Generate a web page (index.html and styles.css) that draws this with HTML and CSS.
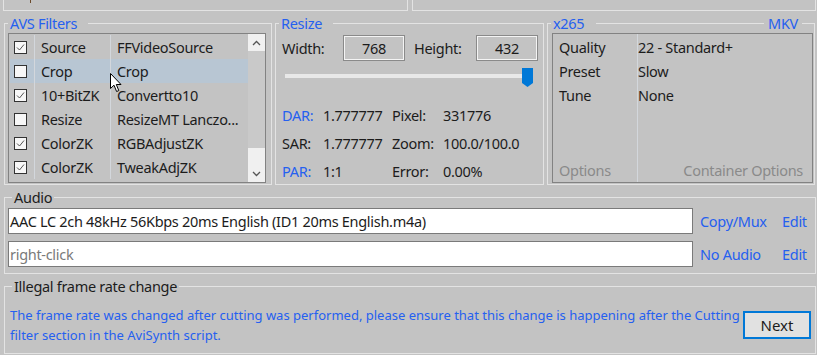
FILE: index.html
```html
<!DOCTYPE html>
<html lang="en">
<head>
    <meta charset="UTF-8">
    <meta name="viewport" content="width=device-width, initial-scale=1.0">
    <title>StaxRip</title>
    <link rel="stylesheet" href="styles.css">
</head>
<body>
    <div class="top">
        <div class="top-box"><span class="tick"></span></div>
        <div class="top-box"></div>
    </div>

    <div class="main-row">
        <fieldset class="group avs">
            <legend class="caption">AVS Filters</legend>
            <div class="filter-list">
                <div class="rows">
                    <div class="row"><span class="cell-check"><span class="check on"></span></span><span class="cell name">Source</span><span class="cell value">FFVideoSource</span></div>
                    <div class="row selected"><span class="cell-check"><span class="check"></span></span><span class="cell name">Crop</span><span class="cell value">Crop</span></div>
                    <div class="row"><span class="cell-check"><span class="check on"></span></span><span class="cell name">10+BitZK</span><span class="cell value">Convertto10</span></div>
                    <div class="row"><span class="cell-check"><span class="check"></span></span><span class="cell name">Resize</span><span class="cell value">ResizeMT Lanczo...</span></div>
                    <div class="row"><span class="cell-check"><span class="check on"></span></span><span class="cell name">ColorZK</span><span class="cell value">RGBAdjustZK</span></div>
                    <div class="row"><span class="cell-check"><span class="check on"></span></span><span class="cell name">ColorZK</span><span class="cell value">TweakAdjZK</span></div>
                </div>
                <div class="scrollbar">
                    <div class="sb-btn">
                        <svg width="9" height="6" viewBox="0 0 9 6"><polyline points="1,5 4.5,1.5 8,5" fill="none" stroke="#555" stroke-width="1.3"/></svg>
                    </div>
                    <div class="sb-track"><div class="sb-thumb"></div></div>
                    <div class="sb-btn">
                        <svg width="9" height="6" viewBox="0 0 9 6"><polyline points="1,1 4.5,4.5 8,1" fill="none" stroke="#555" stroke-width="1.3"/></svg>
                    </div>
                </div>
                <svg class="cursor" width="13" height="20" viewBox="0 0 13 20">
                    <path d="M0.5,0.5 L0.5,15.5 L4,12.2 L6.6,18.5 L8.8,17.6 L6.3,11.5 L11,11.5 Z" fill="#fff" stroke="#000" stroke-width="1"/>
                </svg>
            </div>
        </fieldset>

        <fieldset class="group resize">
            <legend class="caption">Resize</legend>
            <div class="resize-body">
                <div class="size-row">
                    <span class="lbl-w">Width:</span>
                    <span class="num-box">768</span>
                    <span class="lbl-h">Height:</span>
                    <span class="num-box">432</span>
                </div>
                <div class="slider">
                    <div class="track"></div>
                    <svg class="thumb" width="11" height="19" viewBox="0 0 11 19"><path d="M0,0 H11 V15 L5.5,19 L0,15 Z" fill="#0078d7"/></svg>
                </div>
                <div class="info">
                    <span class="link">DAR:</span><span>1.777777</span><span>Pixel:</span><span>331776</span>
                    <span>SAR:</span><span>1.777777</span><span>Zoom:</span><span>100.0/100.0</span>
                    <span class="link">PAR:</span><span>1:1</span><span>Error:</span><span>0.00%</span>
                </div>
            </div>
        </fieldset>

        <fieldset class="group encoder">
            <legend class="caption-split">
                <span class="cap-left">x265</span>
                <span class="fill"></span>
                <span class="cap-right">MKV</span>
                <span class="fill end"></span>
            </legend>
            <div class="option-box">
                <div class="opt-row"><span class="opt-key">Quality</span><span>22 - Standard+</span></div>
                <div class="opt-row"><span class="opt-key">Preset</span><span>Slow</span></div>
                <div class="opt-row"><span class="opt-key">Tune</span><span>None</span></div>
                <div class="opt-footer">
                    <span>Options</span>
                    <span>Container Options</span>
                </div>
            </div>
        </fieldset>
    </div>

    <fieldset class="group wide audio">
        <legend class="caption dark">Audio</legend>
        <div class="audio-grid">
            <div class="text-input">AAC LC 2ch 48kHz 56Kbps 20ms English (ID1 20ms English.m4a)</div>
            <span class="link">Copy/Mux</span>
            <span class="link">Edit</span>
            <div class="text-input placeholder">right-click</div>
            <span class="link">No Audio</span>
            <span class="link">Edit</span>
        </div>
    </fieldset>

    <fieldset class="group wide notice">
        <legend class="caption dark">Illegal frame rate change</legend>
        <div class="notice-body">
            <p class="notice-text">The frame rate was changed after cutting was performed, please ensure that this change is happening after the Cutting filter section in the AviSynth script.</p>
            <button class="next-btn">Next</button>
        </div>
    </fieldset>
</body>
</html>
```

FILE: styles.css
```css
body {
    margin: 0;
    width: 817px;
    height: 355px;
    overflow: hidden;
    background-color: #c3c3c3;
    font-family: "Noto Sans", "Segoe UI", sans-serif;
    font-size: 14.5px;
    letter-spacing: -0.3px;
    color: #1c1c1c;
}

/* cut-off boxes at the very top */
.top {
    display: flex;
    gap: 4px;
    margin: 0 1px 0 3px;
}
.top-box {
    flex: 1;
    height: 10px;
    border: 1px solid #e3e3e3;
    border-top: none;
}
.tick {
    display: block;
    margin-left: 26px;
    width: 1px;
    height: 3px;
    background: #6b4a2a;
}

/* group boxes */
.group {
    margin: 0;
    padding: 0 3px 1px 3px;
    border: 1px solid #e3e3e3;
    min-width: 0;
}
.caption {
    padding: 0 11px 0 2px;
    line-height: 20px;
    color: #2560f0;
}
.caption.dark {
    margin-left: 4px;
    padding: 0 2px;
    color: #1c1c1c;
}
.link {
    color: #2560f0;
}

.main-row {
    display: grid;
    grid-template-columns: 268px 269px 268px;
    column-gap: 3px;
    margin: 2px 0 0 4px;
}

/* AVS filters */
.avs {
    padding-right: 5px;
}
.filter-list {
    position: relative;
    display: flex;
    width: 258px;
    height: 150px;
    box-sizing: border-box;
    border: 1px solid #828282;
}
.rows {
    flex: 1;
    padding: 1px 0 0 1px;
}
.row {
    display: grid;
    grid-template-columns: 25px 76px 1fr;
    height: 24px;
    line-height: 24px;
}
.row.selected {
    background: #b8c6d3;
}
.cell-check {
    display: flex;
    align-items: center;
    padding-left: 4px;
    border-right: 1px solid #d3d7dc;
}
.cell {
    padding-left: 6px;
    white-space: nowrap;
    overflow: hidden;
}
.cell.name {
    border-right: 1px solid #d3d7dc;
}
.check {
    width: 13px;
    height: 13px;
    box-sizing: border-box;
    border: 1px solid #333;
    background: #f7f7f7;
}
.check.on {
    background: #f7f7f7 url("data:image/svg+xml,%3Csvg xmlns='http://www.w3.org/2000/svg' width='11' height='11'%3E%3Cpolyline points='2,5.5 4.5,8 9,2.5' fill='none' stroke='%23555' stroke-width='1'/%3E%3C/svg%3E") no-repeat center;
}
.scrollbar {
    width: 17px;
    display: flex;
    flex-direction: column;
    background: #f0f0f0;
}
.sb-btn {
    height: 17px;
    display: flex;
    align-items: center;
    justify-content: center;
}
.sb-track {
    flex: 1;
}
.sb-thumb {
    height: 97px;
    background: #c9c9c9;
}
.cursor {
    position: absolute;
    left: 101px;
    top: 39px;
}

/* resize */
.resize-body {
    padding-left: 3px;
}
.size-row {
    display: flex;
    align-items: center;
    height: 26px;
    margin-top: 2px;
}
.lbl-w {
    width: 61px;
}
.lbl-h {
    width: 62px;
    margin-left: 9px;
}
.num-box {
    width: 62px;
    height: 26px;
    box-sizing: border-box;
    border: 1px solid #8a8a8a;
    box-shadow: inset 0 0 0 1px #f4f4f4;
    text-align: center;
    line-height: 24px;
}
.slider {
    position: relative;
    width: 248px;
    height: 19px;
    margin: 7px 0 0 3px;
    padding-top: 6px;
    box-sizing: border-box;
}
.track {
    height: 4px;
    background: #e8e8e8;
}
.thumb {
    position: absolute;
    right: 0;
    top: 0;
}
.info {
    display: grid;
    grid-template-columns: 41px 69px 51px auto;
    row-gap: 8px;
    line-height: 20px;
    margin-top: 18px;
}

/* encoder */
.encoder {
    padding-right: 1px;
}
.caption-split {
    display: flex;
    align-items: center;
    width: 100%;
    padding: 0;
    line-height: 20px;
    color: #2560f0;
}
.cap-left {
    padding: 0 12px 0 2px;
}
.cap-right {
    padding: 0 4px;
}
.fill {
    flex: 1;
    height: 1px;
    background: #e3e3e3;
}
.fill.end {
    flex: 0 0 11px;
}
.option-box {
    display: flex;
    flex-direction: column;
    width: 261px;
    height: 150px;
    margin-left: 1px;
    box-sizing: border-box;
    border: 1px solid #828282;
    padding-top: 1px;
    background: linear-gradient(#d3d7dc, #d3d7dc) 84px 0 / 1px 100% no-repeat;
}
.opt-row {
    display: grid;
    grid-template-columns: 85px 1fr;
    height: 24px;
    line-height: 24px;
}
.opt-key {
    padding-left: 6px;
}
.opt-footer {
    margin-top: auto;
    display: flex;
    justify-content: space-between;
    padding: 0 9px 2px 6px;
    line-height: 20px;
    color: #8a8a8a;
}

/* audio */
.wide {
    margin: 2px 1px 0 4px;
}
.audio {
    padding-bottom: 6px;
}
.audio-grid {
    display: grid;
    grid-template-columns: 685px 82px auto;
    grid-auto-rows: 26px;
    row-gap: 7px;
    align-items: center;
    margin-top: 1px;
}
.audio-grid .link {
    padding-left: 7px;
}
.text-input {
    height: 26px;
    box-sizing: border-box;
    border: 1px solid #7a7a7a;
    background: #fff;
    padding-left: 1px;
    line-height: 24px;
    white-space: nowrap;
}
.text-input.placeholder {
    color: #7a7a7a;
}

/* notice */
.notice {
    padding: 9px 4px 8px 3px;
}
.notice-body {
    display: flex;
    align-items: center;
}
.notice-text {
    margin: 0 0 0 2px;
    width: 730px;
    font-size: 13px;
    letter-spacing: 0;
    line-height: 20px;
    color: #2560f0;
}
.next-btn {
    margin-left: auto;
    width: 68px;
    height: 28px;
    border: 2px solid #0078d7;
    background: #e1e1e1;
    font-family: inherit;
    font-size: 15px;
    color: #1c1c1c;
    padding: 0;
}
```
